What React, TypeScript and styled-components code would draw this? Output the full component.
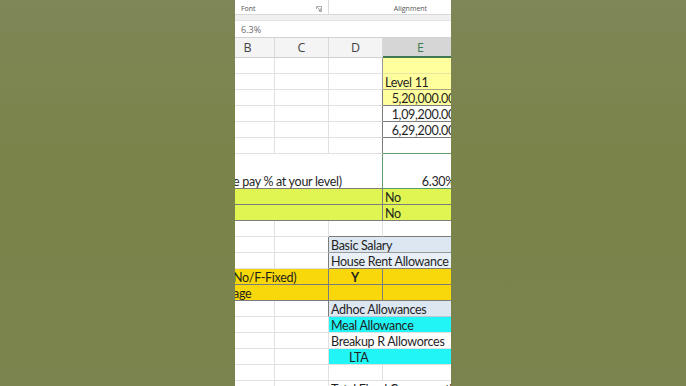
import styled, { createGlobalStyle } from "styled-components";

const GRID = "#e1e1e1";
const DARK = "#7c7c7c";
const ACTIVE = "#5e9a6c";
const YELLOW = "#ffff9e";
const LIME = "#e0f552";
const GOLD = "#f8d80a";
const BLUE = "#dde7f2";
const PALE = "#e9f0f8";
const CYAN = "#22f5f5";

const GlobalStyle = createGlobalStyle`
  html, body {
    margin: 0;
    padding: 0;
  }
  body {
    width: 686px;
    height: 386px;
    overflow: hidden;
    background: #7a8249;
    font-family: Lato, "Liberation Sans", sans-serif;
  }
`;

const Stage = styled.div`
  height: 386px;
  display: flex;
  justify-content: center;
  background: linear-gradient(to bottom, #7f8657 0%, #7a8349 45%, #7b844e 100%);
`;

const Window = styled.div`
  width: 216px;
  height: 100%;
  background: #fff;
  overflow: hidden;
  display: flex;
  flex-direction: column;
`;

const Ribbon = styled.div`
  display: flex;
  height: 14px;
  flex-shrink: 0;
  border-bottom: 1px solid #d9d9d9;
`;

const Group = styled.div<{ $width: number; $center?: boolean }>`
  width: ${(p) => p.$width}px;
  flex-shrink: 0;
  box-sizing: border-box;
  display: flex;
  align-items: center;
  justify-content: ${(p) => (p.$center ? "center" : "space-between")};
  padding: 3px 6px 0;
  border-right: 1px solid #dadada;
  font: 7px "Open Sans", sans-serif;
  color: #555;
`;

const Band = styled.div`
  height: 5px;
  flex-shrink: 0;
  background: #f0f0f0;
  border-bottom: 1px solid #e4e4e4;
`;

const FormulaBar = styled.div`
  height: 16px;
  flex-shrink: 0;
  display: flex;
  align-items: center;
  padding-left: 6px;
  border-bottom: 1px solid #d2d2d2;
  font: 9px "Open Sans", sans-serif;
  color: #6b6b6b;
`;

const Sheet = styled.div`
  margin-left: -14px;
  display: grid;
  grid-template-columns: 54px 54px 54px 76px;
  grid-template-rows: 20px repeat(6, 16px) 35px repeat(13, 16px);
`;

const ColHead = styled.div<{ $active?: boolean }>`
  box-sizing: border-box;
  display: flex;
  align-items: center;
  justify-content: center;
  background: ${(p) => (p.$active ? "#d6d6d6" : "#f4f4f4")};
  border-right: 1px solid #dadada;
  border-bottom: ${(p) => (p.$active ? "2px solid #3f7a55" : "1px solid #cfcfcf")};
  color: ${(p) => (p.$active ? "#3f7a55" : "#444")};
  font: 12.5px "Open Sans", sans-serif;
`;

const Cell = styled.div<{
  $span?: number;
  $bg?: string;
  $right?: string;
  $bottom?: string;
  $align?: "left" | "right" | "center";
  $indent?: number;
  $bold?: boolean;
}>`
  grid-column: span ${(p) => p.$span ?? 1};
  box-sizing: border-box;
  min-width: 0;
  display: flex;
  align-items: flex-end;
  justify-content: ${(p) =>
    p.$align === "right" ? "flex-end" : p.$align === "center" ? "center" : "flex-start"};
  padding: 0 3px 0 ${(p) => p.$indent ?? 2}px;
  background: ${(p) => p.$bg ?? "#fff"};
  border-right: 1px solid ${(p) => p.$right ?? GRID};
  border-bottom: 1px solid ${(p) => p.$bottom ?? GRID};
  font-size: 12.5px;
  line-height: 13px;
  letter-spacing: -0.3px;
  font-weight: ${(p) => (p.$bold ? 700 : 400)};
  color: #1f1f1f;
  white-space: nowrap;
`;

const Launcher = () => (
  <svg width="6" height="6" viewBox="0 0 6 6">
    <path d="M0.5 3V0.5H5.5V5.5H3" fill="none" stroke="#888" strokeWidth="0.7" />
    <path d="M1.2 1.2L4.4 4.4M4.4 2.4V4.4H2.4" fill="none" stroke="#888" strokeWidth="0.7" />
  </svg>
);

const App = () => {
  return (
    <>
      <GlobalStyle />
      <Stage>
        <Window>
          <Ribbon>
            <Group $width={94}>
              <span>Font</span>
              <Launcher />
            </Group>
            <Group $width={164} $center>
              Alignment
            </Group>
          </Ribbon>
          <Band />
          <FormulaBar>6.3%</FormulaBar>
          <Sheet>
            <ColHead>B</ColHead>
            <ColHead>C</ColHead>
            <ColHead>D</ColHead>
            <ColHead $active>E</ColHead>

            <Cell />
            <Cell />
            <Cell $right="#9a9a9a" />
            <Cell $bg={YELLOW} $bottom="#e6e6a0" />

            <Cell />
            <Cell />
            <Cell $right="#9a9a9a" />
            <Cell $bg={YELLOW} $bottom="#a8a47a">Level 11</Cell>

            <Cell />
            <Cell />
            <Cell $right={DARK} />
            <Cell $bg={YELLOW} $bottom={DARK} $align="right">5,20,000.00</Cell>

            <Cell />
            <Cell />
            <Cell $right={DARK} />
            <Cell $bottom={DARK} $align="right">1,09,200.00</Cell>

            <Cell />
            <Cell />
            <Cell $right={DARK} />
            <Cell $bottom={DARK} $align="right">6,29,200.00</Cell>

            <Cell />
            <Cell />
            <Cell $right={DARK} />
            <Cell $bottom={ACTIVE} />

            <Cell $span={3} $indent={12} $right={ACTIVE} $bottom={DARK}>
              e pay % at your level)
            </Cell>
            <Cell $bottom={ACTIVE} $align="right">6.30%</Cell>

            <Cell $span={3} $bg={LIME} $right={DARK} $bottom={DARK} />
            <Cell $bg={LIME} $bottom={DARK}>No</Cell>

            <Cell $span={3} $bg={LIME} $right={DARK} $bottom={DARK} />
            <Cell $bg={LIME} $bottom={DARK}>No</Cell>

            <Cell />
            <Cell />
            <Cell $bottom={DARK} />
            <Cell $bottom={DARK} />

            <Cell />
            <Cell $right={DARK} />
            <Cell $span={2} $bg={BLUE} $bottom="#9a9a9a">Basic Salary</Cell>

            <Cell />
            <Cell $right={DARK} />
            <Cell $span={2} $bg={PALE} $bottom={DARK}>House Rent Allowance</Cell>

            <Cell $span={2} $indent={12} $bg={GOLD} $right={DARK} $bottom={DARK}>
              No/F-Fixed)
            </Cell>
            <Cell $bg={GOLD} $right={DARK} $bottom={DARK} $align="center" $bold>
              Y
            </Cell>
            <Cell $bg={GOLD} $bottom={DARK} />

            <Cell $span={2} $indent={12} $bg={GOLD} $right={DARK} $bottom={DARK}>
              age
            </Cell>
            <Cell $bg={GOLD} $right={DARK} $bottom={DARK} />
            <Cell $bg={GOLD} $bottom={DARK} />

            <Cell />
            <Cell $right={DARK} />
            <Cell $span={2} $bg={BLUE} $bottom="#b9c6d3">Adhoc Allowances</Cell>

            <Cell />
            <Cell />
            <Cell $span={2} $bg={CYAN}>Meal Allowance</Cell>

            <Cell />
            <Cell />
            <Cell $span={2}>Breakup R Alloworces</Cell>

            <Cell />
            <Cell />
            <Cell $span={2} $bg={CYAN} $indent={20}>LTA</Cell>

            <Cell />
            <Cell />
            <Cell />
            <Cell />

            <Cell />
            <Cell />
            <Cell $span={2}>Total Fixed Compensation</Cell>
          </Sheet>
        </Window>
      </Stage>
    </>
  );
};

export default App;
